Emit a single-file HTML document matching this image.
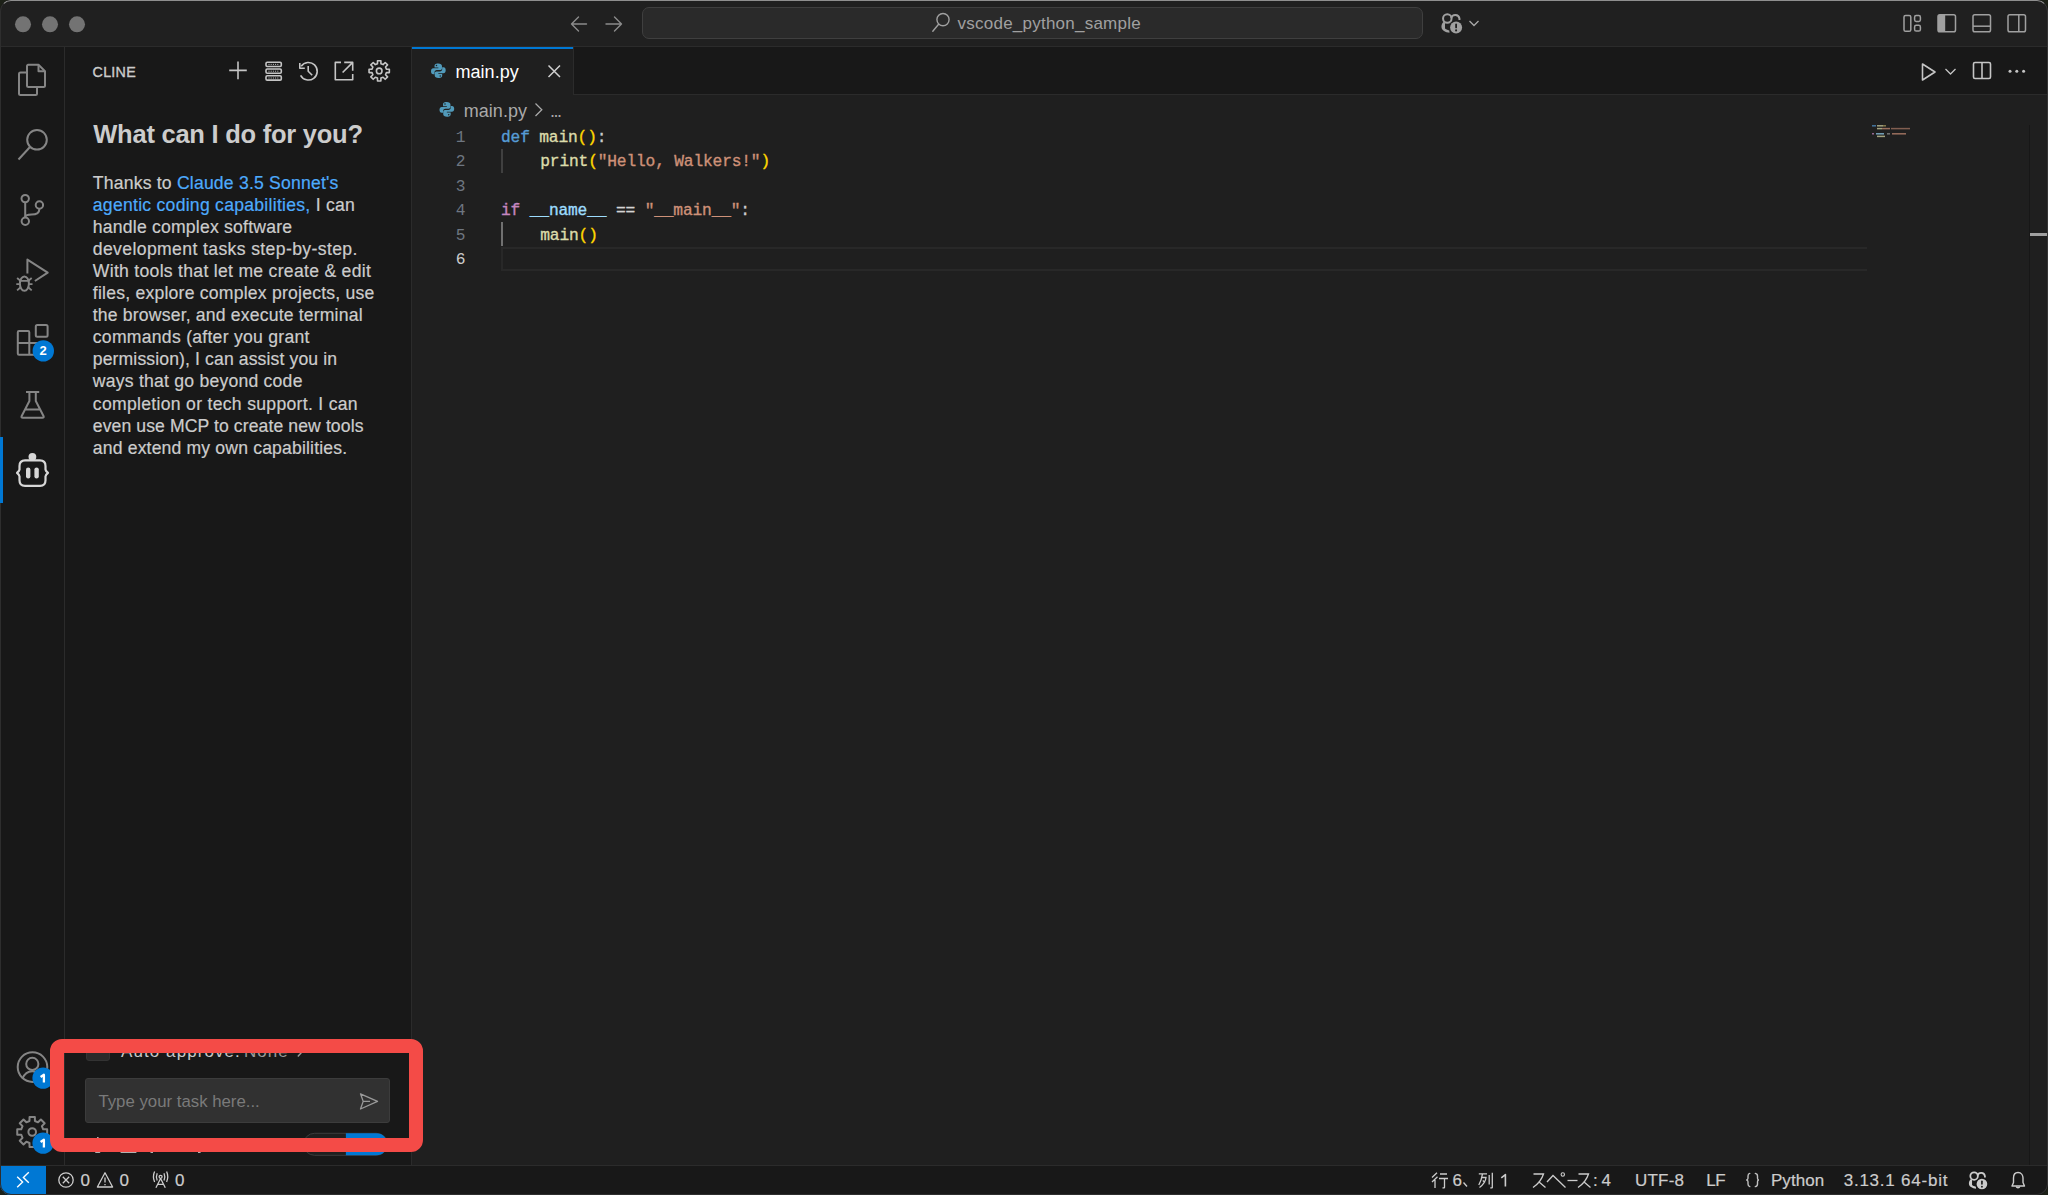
<!DOCTYPE html>
<html><head><meta charset="utf-8">
<style>
*{box-sizing:border-box;margin:0;padding:0}
html,body{width:2048px;height:1195px;overflow:hidden;background:#1d2118}
body{font-family:"Liberation Sans",sans-serif;position:relative}
.a{position:absolute}
#win{position:absolute;left:0;top:0;width:2048px;height:1195px;border-radius:11px;overflow:hidden;background:#1f1f1f}
.txt{position:absolute;white-space:pre;line-height:1}
svg.ic{position:absolute;left:0;top:0;overflow:visible}
</style></head><body>
<div id="win">

<div class="a" style="left:0;top:0;width:2048px;height:46px;background:#202020"></div>
<div class="a" style="left:0;top:46px;width:2048px;height:1px;background:#2b2b2b"></div>
<div class="a" style="left:0;top:47px;width:64px;height:1118px;background:#181818"></div>
<div class="a" style="left:64px;top:47px;width:1px;height:1118px;background:#2b2b2b"></div>
<div class="a" style="left:65px;top:47px;width:346px;height:1118px;background:#181818"></div>
<div class="a" style="left:411px;top:47px;width:1px;height:1118px;background:#2b2b2b"></div>
<div class="a" style="left:412px;top:47px;width:1636px;height:47px;background:#181818"></div>
<div class="a" style="left:573px;top:94px;width:1475px;height:1px;background:#2b2b2b"></div>
<div class="a" style="left:412px;top:47px;width:161px;height:48px;background:#1f1f1f"></div>
<div class="a" style="left:412px;top:47px;width:161px;height:2px;background:#0078d4"></div>
<div class="a" style="left:573px;top:47px;width:1px;height:48px;background:#2b2b2b"></div>
<div class="a" style="left:0;top:1165px;width:2048px;height:1px;background:#2b2b2b"></div>
<div class="a" style="left:0;top:1166px;width:2048px;height:29px;background:#181818"></div>
<svg class="ic" width="2048" height="47">
<circle cx="23" cy="24.3" r="8" fill="#737373"/>
<circle cx="50" cy="24.3" r="8" fill="#737373"/>
<circle cx="77" cy="24.3" r="8" fill="#737373"/>
<g fill="none" stroke="#8b8b8b" stroke-width="1.4" stroke-linecap="round" stroke-linejoin="round">
<path d="M571.5,24 H586.5 M578.5,17 L571.5,24 L578.5,31"/>
<path d="M606,24 H621.5 M614.5,17 L621.5,24 L614.5,31"/>
</g>
<rect x="642.5" y="7.5" width="780" height="31" rx="6.5" fill="#2a2a2a" stroke="#3f3f3f" stroke-width="1"/>
<g fill="none" stroke="#a0a0a0" stroke-width="1.4" stroke-linecap="round">
<circle cx="943" cy="19.6" r="6.1"/>
<path d="M938.6,24.2 L932.8,31.3"/>
</g>
<g transform="translate(1447.3,18.5) scale(1.0)">
<g fill="none" stroke="#a0a0a0" stroke-width="2">
<circle cx="0" cy="0" r="4.25"/>
<path d="M3.9,-0.5 A4.25,4.25 0 0 1 12.15,0 L12.15,1.6"/>
</g>
<path d="M-3.4,3.3 C-6.2,5.2 -6.8,9.8 -4,12 C-2,13.5 0.5,14.1 2.2,14.3 L2,12 C0,11.5 -1.5,10.9 -2.3,10.1 L-2.3,4.2 Z" fill="#a0a0a0"/>
<circle cx="8.8" cy="8.9" r="6.8" fill="#202020"/>
<circle cx="8.8" cy="8.9" r="6" fill="#a0a0a0"/>
<rect x="7.9" y="5" width="1.8" height="4.8" rx="0.9" fill="#202020"/>
<circle cx="8.8" cy="11.9" r="1.05" fill="#202020"/>
</g><path d="M1469.5,21 L1474,25.5 L1478.5,21" fill="none" stroke="#a8a8a8" stroke-width="1.3"/>
<!-- layout icons -->
<g fill="none" stroke="#a0a0a0" stroke-width="1.5">
<rect x="1904" y="15.5" width="6.8" height="15.8" rx="1.6"/>
<rect x="1914.6" y="15.6" width="5.8" height="5.8" rx="1.6"/>
<rect x="1914.6" y="25.3" width="5.8" height="5.8" rx="1.6"/>
<rect x="1938" y="14.8" width="17.5" height="17" rx="1.8"/>
<rect x="1973" y="14.8" width="17.5" height="17" rx="1.8"/>
<path d="M1973,26.2 H1990.5"/>
<rect x="2008" y="14.8" width="17.5" height="17" rx="1.8"/>
<path d="M2018.8,14.8 V31.8"/>
</g>
<path d="M1939.8,14.8 H1945.2 V31.8 H1939.8 Q1938,31.8 1938,30 V16.6 Q1938,14.8 1939.8,14.8 Z" fill="#a0a0a0"/>
</svg>
<div class="txt" style='left:957.60px;top:15.00px;font-size:17px;color:#a0a0a0;font-weight:400;font-family:"Liberation Sans";letter-spacing:0.232px;'>vscode_python_sample</div>
<svg class="ic" width="64" height="1195">
<g fill="none" stroke="#858585" stroke-width="2" stroke-linejoin="round" stroke-linecap="butt">
<!-- explorer -->
<path d="M26,72.5 H20.5 Q19,72.5 19,74 V93.5 Q19,95 20.5,95 H35.5 Q37,95 37,93.5 V87.5"/>
<path d="M28,64.8 H38.5 L45,71.3 V85.5 Q45,87 43.5,87 H28.5 Q27,87 27,85.5 V66.3 Q27,64.8 28.5,64.8 Z"/>
<path d="M38.5,65 V71.3 H45"/>
<!-- search -->
<circle cx="37" cy="139.8" r="9.8"/>
<path d="M30,147 L18.5,159.5"/>
<!-- source control -->
<circle cx="25.2" cy="198.6" r="3.7"/>
<circle cx="39.4" cy="205" r="3.7"/>
<circle cx="25.3" cy="221.2" r="3.7"/>
<path d="M25.2,202.3 V217.5"/>
<path d="M39.4,208.7 C39.4,213.5 36,214.6 31.5,214.6 C27.5,214.6 25.2,215.8 25.2,217.5"/>
<!-- run debug -->
<path d="M27.4,273.4 V259.6 L47.7,272.6 L34.9,281"/>
<ellipse cx="24.4" cy="283.6" rx="4.5" ry="7.2"/>
<path d="M20.2,280.8 H28.6 M17.1,278 L20.4,280.8 M31.7,278 L28.4,280.8 M16.3,284.1 H19.9 M32.5,284.1 H28.9 M17.1,290.4 L20.4,287.5 M31.7,290.4 L28.4,287.5" stroke-width="1.8"/>
<!-- extensions -->
<path d="M29.3,343 V354.8 H19 Q17.8,354.8 17.8,353.6 V332.2 Q17.8,331 19,331 H28.1 Q29.3,331 29.3,332.2 V343 H40.8 Q42,343 42,344.2 V353.6 Q42,354.8 40.8,354.8 H29.3 M17.8,343 H29.3"/>
<rect x="35.8" y="325" width="11.8" height="11.8" rx="1.5"/>
<!-- flask -->
<path d="M26,392 H39.2 M29.4,392 V401 L21.6,416.2 Q21,417.8 22.8,417.8 H42.4 Q44.2,417.8 43.6,416.2 L35.8,401 V392 M24.8,409.4 H40.4"/>
<!-- account -->
<circle cx="32.5" cy="1067.1" r="14.8"/>
<circle cx="32.3" cy="1063.9" r="6.1"/>
<path d="M22.5,1078.5 C24.5,1073.5 28,1071.2 32.3,1071.2 C36.6,1071.2 40,1073.5 42,1078.5"/>
<!-- gear -->
<path d="M43.17,1129.28 L47.16,1129.33 L47.16,1134.67 L43.17,1134.72 L41.88,1137.83 L44.67,1140.69 L40.89,1144.47 L38.03,1141.68 L34.92,1142.97 L34.87,1146.96 L29.53,1146.96 L29.48,1142.97 L26.37,1141.68 L23.51,1144.47 L19.73,1140.69 L22.52,1137.83 L21.23,1134.72 L17.24,1134.67 L17.24,1129.33 L21.23,1129.28 L22.52,1126.17 L19.73,1123.31 L23.51,1119.53 L26.37,1122.32 L29.48,1121.03 L29.53,1117.04 L34.87,1117.04 L34.92,1121.03 L38.03,1122.32 L40.89,1119.53 L44.67,1123.31 L41.88,1126.17Z"/>
<circle cx="32.2" cy="1132" r="3.8"/>
</g>
<!-- cline bot (active) -->
<g fill="none" stroke="#d7d7d7" stroke-width="2.2" stroke-linejoin="round">
<path d="M25,460.4 H40 Q45.5,460.4 45.5,466 V469.5 Q45.7,471 48,472.9 Q45.7,474.8 45.5,476.3 V480.2 Q45.5,485.8 40,485.8 H25 Q19.5,485.8 19.5,480.2 V476.3 Q19.3,474.8 17,472.9 Q19.3,471 19.5,469.5 V466 Q19.5,460.4 25,460.4 Z"/>
</g>
<circle cx="32.4" cy="456.8" r="3.9" fill="#d7d7d7"/>
<rect x="26" y="467.4" width="4.4" height="11" rx="2.2" fill="#d7d7d7"/>
<rect x="34.4" y="467.4" width="4.4" height="11" rx="2.2" fill="#d7d7d7"/>

<!-- badges -->
<circle cx="43.3" cy="350.9" r="10.7" fill="#0078d4"/>
<circle cx="43.1" cy="1078.1" r="10.7" fill="#0078d4"/>
<circle cx="43.1" cy="1143.1" r="10.7" fill="#0078d4"/>
</svg>
<div class="txt" style='left:39.60px;top:344.30px;font-size:13px;color:#ffffff;font-weight:700;font-family:"Liberation Sans";'>2</div>
<svg class="ic" width="64" height="1195"><g fill="none" stroke="#ffffff" stroke-width="2.3" stroke-linejoin="round">
<path d="M40.6,1077 L43.9,1074.8 V1082.4"/><path d="M40.6,1142 L43.9,1139.8 V1147.4"/></g></svg>
<div class="txt" style='left:92.60px;top:64.80px;font-size:14.3px;color:#cccccc;font-weight:400;font-family:"Liberation Sans";letter-spacing:0.250px;-webkit-text-stroke:0.35px currentColor;'>CLINE</div>
<svg class="ic" width="412" height="100">
<g fill="none" stroke="#c5c5c5" stroke-width="1.6" stroke-linecap="butt" stroke-linejoin="round">
<path d="M238,61.6 V79.2 M229.2,70.4 H246.8"/>
<rect x="266" y="62.2" width="15.3" height="4.3" rx="1.2"/>
<rect x="266" y="69" width="15.3" height="4.3" rx="1.2"/>
<rect x="266" y="75.8" width="15.3" height="4.3" rx="1.2"/>
<path d="M301.2,66.2 A8.8,8.8 0 1 1 300.6,75.3"/>
<path d="M299.8,63 V68.2 H304.8"/>
<path d="M308.2,65.9 V71.3 L312.2,75.2"/>
<path d="M341,62.4 H335.3 V79.8 H352.7 V74 M344.2,62.4 H352.7 V70.8 M352.5,62.6 L342.6,72.5"/>
<path d="M386.40,69.17 L389.36,69.21 L389.36,72.59 L386.40,72.63 L385.51,74.77 L387.58,76.89 L385.19,79.28 L383.07,77.21 L380.93,78.10 L380.89,81.06 L377.51,81.06 L377.47,78.10 L375.33,77.21 L373.21,79.28 L370.82,76.89 L372.89,74.77 L372.00,72.63 L369.04,72.59 L369.04,69.21 L372.00,69.17 L372.89,67.03 L370.82,64.91 L373.21,62.52 L375.33,64.59 L377.47,63.70 L377.51,60.74 L380.89,60.74 L380.93,63.70 L383.07,64.59 L385.19,62.52 L387.58,64.91 L385.51,67.03Z"/>
<circle cx="379.2" cy="70.9" r="2.8"/>
</g>
<g stroke="#c5c5c5" stroke-width="1" stroke-dasharray="1 1.2">
<path d="M268.5,64.4 H278.8 M268.5,71.2 H278.8 M268.5,78 H278.8"/>
</g>
</svg>
<div class="txt" style='left:93.30px;top:122.10px;font-size:25.5px;color:#cccccc;font-weight:700;font-family:"Liberation Sans";letter-spacing:-0.243px;'>What can I do for you?</div>
<div class="txt" style='left:92.80px;top:175.20px;font-size:17.6px;color:#cccccc;font-weight:400;font-family:"Liberation Sans";letter-spacing:0.196px;-webkit-text-stroke:0.2px currentColor;'>Thanks to <span style="color:#4daafc">Claude 3.5 Sonnet&#39;s</span></div>
<div class="txt" style='left:92.80px;top:197.23px;font-size:17.6px;color:#cccccc;font-weight:400;font-family:"Liberation Sans";letter-spacing:0.264px;-webkit-text-stroke:0.2px currentColor;'><span style="color:#4daafc">agentic coding capabilities,</span> I can</div>
<div class="txt" style='left:92.80px;top:219.26px;font-size:17.6px;color:#cccccc;font-weight:400;font-family:"Liberation Sans";letter-spacing:0.209px;-webkit-text-stroke:0.2px currentColor;'>handle complex software</div>
<div class="txt" style='left:92.80px;top:241.29px;font-size:17.6px;color:#cccccc;font-weight:400;font-family:"Liberation Sans";letter-spacing:0.377px;-webkit-text-stroke:0.2px currentColor;'>development tasks step-by-step.</div>
<div class="txt" style='left:92.80px;top:263.32px;font-size:17.6px;color:#cccccc;font-weight:400;font-family:"Liberation Sans";letter-spacing:0.289px;-webkit-text-stroke:0.2px currentColor;'>With tools that let me create &amp; edit</div>
<div class="txt" style='left:92.80px;top:285.35px;font-size:17.6px;color:#cccccc;font-weight:400;font-family:"Liberation Sans";letter-spacing:0.220px;-webkit-text-stroke:0.2px currentColor;'>files, explore complex projects, use</div>
<div class="txt" style='left:92.80px;top:307.38px;font-size:17.6px;color:#cccccc;font-weight:400;font-family:"Liberation Sans";letter-spacing:0.178px;-webkit-text-stroke:0.2px currentColor;'>the browser, and execute terminal</div>
<div class="txt" style='left:92.80px;top:329.41px;font-size:17.6px;color:#cccccc;font-weight:400;font-family:"Liberation Sans";letter-spacing:0.267px;-webkit-text-stroke:0.2px currentColor;'>commands (after you grant</div>
<div class="txt" style='left:92.80px;top:351.44px;font-size:17.6px;color:#cccccc;font-weight:400;font-family:"Liberation Sans";letter-spacing:0.119px;-webkit-text-stroke:0.2px currentColor;'>permission), I can assist you in</div>
<div class="txt" style='left:92.80px;top:373.47px;font-size:17.6px;color:#cccccc;font-weight:400;font-family:"Liberation Sans";letter-spacing:0.226px;-webkit-text-stroke:0.2px currentColor;'>ways that go beyond code</div>
<div class="txt" style='left:92.80px;top:395.50px;font-size:17.6px;color:#cccccc;font-weight:400;font-family:"Liberation Sans";letter-spacing:0.300px;-webkit-text-stroke:0.2px currentColor;'>completion or tech support. I can</div>
<div class="txt" style='left:92.80px;top:417.53px;font-size:17.6px;color:#cccccc;font-weight:400;font-family:"Liberation Sans";letter-spacing:0.097px;-webkit-text-stroke:0.2px currentColor;'>even use MCP to create new tools</div>
<div class="txt" style='left:92.80px;top:439.56px;font-size:17.6px;color:#cccccc;font-weight:400;font-family:"Liberation Sans";letter-spacing:0.163px;-webkit-text-stroke:0.2px currentColor;'>and extend my own capabilities.</div>
<svg class="ic" width="2048" height="130">
<g transform="translate(431,63.4) scale(0.98)" fill="#519aba">
<path d="M7.3,0 C4.2,0 3.6,1.3 3.6,2.6 V4.3 H7.5 V5 H2.3 C0.9,5 0,6.2 0,8 C0,9.8 0.8,11 2.2,11 H3.6 V9.1 C3.6,7.8 4.6,6.8 5.9,6.8 H9.4 C10.5,6.8 11.2,6 11.2,4.9 V2.6 C11.2,1.1 9.9,0 7.3,0 Z"/>
<path d="M7.7,15 C10.8,15 11.4,13.7 11.4,12.4 V10.7 H7.5 V10 H12.7 C14.1,10 15,8.8 15,7 C15,5.2 14.2,4 12.8,4 H11.4 V5.9 C11.4,7.2 10.4,8.2 9.1,8.2 H5.6 C4.5,8.2 3.8,9 3.8,10.1 V12.4 C3.8,13.9 5.1,15 7.7,15 Z"/>
<circle cx="5.6" cy="2.1" r="0.75" fill="#1f1f1f"/>
<circle cx="9.4" cy="12.9" r="0.75" fill="#1f1f1f"/>
</g>
<g transform="translate(439.5,102) scale(0.98)" fill="#519aba">
<path d="M7.3,0 C4.2,0 3.6,1.3 3.6,2.6 V4.3 H7.5 V5 H2.3 C0.9,5 0,6.2 0,8 C0,9.8 0.8,11 2.2,11 H3.6 V9.1 C3.6,7.8 4.6,6.8 5.9,6.8 H9.4 C10.5,6.8 11.2,6 11.2,4.9 V2.6 C11.2,1.1 9.9,0 7.3,0 Z"/>
<path d="M7.7,15 C10.8,15 11.4,13.7 11.4,12.4 V10.7 H7.5 V10 H12.7 C14.1,10 15,8.8 15,7 C15,5.2 14.2,4 12.8,4 H11.4 V5.9 C11.4,7.2 10.4,8.2 9.1,8.2 H5.6 C4.5,8.2 3.8,9 3.8,10.1 V12.4 C3.8,13.9 5.1,15 7.7,15 Z"/>
<circle cx="5.6" cy="2.1" r="0.75" fill="#1f1f1f"/>
<circle cx="9.4" cy="12.9" r="0.75" fill="#1f1f1f"/>
</g>
<path d="M548.5,65.5 L560,77 M560,65.5 L548.5,77" stroke="#d0d0d0" stroke-width="1.5" fill="none"/>
<path d="M535.5,103.5 L541.8,109.8 L535.5,116" stroke="#a9a9a9" stroke-width="1.3" fill="none"/>
<!-- editor toolbar -->
<g fill="none" stroke="#c5c5c5" stroke-width="1.6" stroke-linejoin="round">
<path d="M1922.5,64 L1935,72 L1922.5,80 Z"/>
<path d="M1945.5,69 L1950.5,74 L1955.5,69" stroke-width="1.3"/>
<rect x="1973.5" y="62.5" width="17" height="16" rx="1.5"/>
<path d="M1982,62.5 V78.5"/>
</g>
<g fill="#c5c5c5"><circle cx="2010" cy="71.2" r="1.5"/><circle cx="2016.8" cy="71.2" r="1.5"/><circle cx="2023.6" cy="71.2" r="1.5"/></g>
</svg>
<div class="txt" style='left:455.50px;top:62.90px;font-size:18px;color:#ffffff;font-weight:400;font-family:"Liberation Sans";letter-spacing:0.033px;'>main.py</div>
<div class="txt" style='left:463.70px;top:101.70px;font-size:18px;color:#a9a9a9;font-weight:400;font-family:"Liberation Sans";letter-spacing:0.050px;'>main.py</div>
<div class="txt" style='left:550.00px;top:101.70px;font-size:18px;color:#a9a9a9;font-weight:400;font-family:"Liberation Sans";letter-spacing:-1.500px;'>...</div>
<div class="txt" style='left:455.68px;top:130.10px;font-size:16.25px;color:#6e7681;font-weight:400;font-family:"Liberation Mono";'>1</div>
<div class="txt" style='left:455.68px;top:154.46px;font-size:16.25px;color:#6e7681;font-weight:400;font-family:"Liberation Mono";'>2</div>
<div class="txt" style='left:455.68px;top:178.82px;font-size:16.25px;color:#6e7681;font-weight:400;font-family:"Liberation Mono";'>3</div>
<div class="txt" style='left:455.68px;top:203.18px;font-size:16.25px;color:#6e7681;font-weight:400;font-family:"Liberation Mono";'>4</div>
<div class="txt" style='left:455.68px;top:227.54px;font-size:16.25px;color:#6e7681;font-weight:400;font-family:"Liberation Mono";'>5</div>
<div class="txt" style='left:455.68px;top:251.90px;font-size:16.25px;color:#cccccc;font-weight:400;font-family:"Liberation Mono";'>6</div>
<div class="txt" style='left:501.00px;top:130.10px;font-size:16.25px;color:#cccccc;font-weight:400;font-family:"Liberation Mono";letter-spacing:-0.18px;-webkit-text-stroke:0.35px currentColor;'><span style="color:#569cd6">def</span> <span style="color:#dcdcaa">main</span><span style="color:#ffd700">()</span>:</div>
<div class="txt" style='left:540.28px;top:154.46px;font-size:16.25px;color:#cccccc;font-weight:400;font-family:"Liberation Mono";letter-spacing:-0.18px;-webkit-text-stroke:0.35px currentColor;'><span style="color:#dcdcaa">print</span><span style="color:#ffd700">(</span><span style="color:#ce9178">"Hello, Walkers!"</span><span style="color:#ffd700">)</span></div>
<div class="txt" style='left:501.00px;top:203.18px;font-size:16.25px;color:#cccccc;font-weight:400;font-family:"Liberation Mono";letter-spacing:-0.18px;-webkit-text-stroke:0.35px currentColor;'><span style="color:#c586c0">if</span> <span style="color:#9cdcfe">__name__</span> <span style="color:#d4d4d4">==</span> <span style="color:#ce9178">"__main__"</span>:</div>
<div class="txt" style='left:540.28px;top:227.54px;font-size:16.25px;color:#cccccc;font-weight:400;font-family:"Liberation Mono";letter-spacing:-0.18px;-webkit-text-stroke:0.35px currentColor;'><span style="color:#dcdcaa">main</span><span style="color:#ffd700">()</span></div>
<div class="a" style="left:501px;top:149px;width:2px;height:24.4px;background:#404040"></div>
<div class="a" style="left:501px;top:222px;width:2px;height:24.4px;background:#707070"></div>
<div class="a" style="left:501px;top:246.6px;width:1366px;height:24.4px;border:2px solid #282828;border-right:none"></div>
<div class="a" style="left:2029px;top:125px;width:1px;height:1040px;background:#171717"></div>
<div class="a" style="left:2030px;top:232.5px;width:18px;height:3px;background:#a0a0a0"></div>

<svg class="ic" width="2048" height="200">
<g stroke-width="1.5" opacity="0.7">
<path d="M1872,125.8 H1876" stroke="#569cd6"/><path d="M1877,125.8 H1883" stroke="#dcdcaa"/><path d="M1883,125.8 H1886" stroke="#b0a060"/>
<path d="M1877,128.6 H1882" stroke="#dcdcaa"/><path d="M1882,128.6 H1890" stroke="#ce9178"/><path d="M1891,128.6 H1910" stroke="#ce9178" opacity="0.8"/>
<path d="M1872,133.8 H1874" stroke="#c586c0"/><path d="M1876,133.8 H1884" stroke="#9cdcfe"/><path d="M1887,133.8 H1890" stroke="#999"/><path d="M1892,133.8 H1906" stroke="#ce9178"/>
<path d="M1877,136.4 H1885" stroke="#dcdcaa"/>
</g>
</svg>
<div class="a" style="left:85.5px;top:1044px;width:24px;height:17px;border-radius:3px;background:#2a2a2a;border:1px solid #333"></div>
<div class="a" style="left:85px;top:1078.4px;width:305px;height:44.3px;border-radius:3px;background:#313131;border:1px solid #3c3c3c"></div>
<svg class="ic" width="412" height="1195">
<path d="M360.5,1093.8 L377.5,1101.4 L360.5,1109 L363.2,1101.4 Z M363.2,1101.4 H370" fill="none" stroke="#9a9a9a" stroke-width="1.3" stroke-linejoin="round"/>
<rect x="303.5" y="1133.3" width="84" height="22" rx="11" fill="#1f1f1f" stroke="#3c3c3c" stroke-width="1"/>
<path d="M345.9,1133.3 H376.5 A11,11 0 0 1 376.5,1155.3 H345.9 Z" fill="#0078d4"/>
</svg>
<div class="txt" style='left:121.00px;top:1043.00px;font-size:17px;color:#c8c8c8;font-weight:400;font-family:"Liberation Sans";letter-spacing:1.083px;'>Auto approve:</div>
<div class="txt" style='left:244.00px;top:1043.00px;font-size:17px;color:#9a9a9a;font-weight:400;font-family:"Liberation Sans";letter-spacing:1.000px;'>None</div>
<svg class="ic" width="412" height="1195">
<path d="M297.8,1056.5 L301.5,1052.5" stroke="#9a9a9a" stroke-width="1.4"/>
<g fill="#b0b0b0">
<rect x="95" y="1151" width="5.4" height="2" rx="1"/>
<rect x="120.6" y="1151" width="15.8" height="2"/>
<rect x="150.5" y="1151" width="2.5" height="2"/>
<rect x="198" y="1151" width="2.6" height="2"/>
<rect x="97" y="1137" width="1.6" height="1.6"/>
</g></svg>
<div class="txt" style='left:98.40px;top:1093.90px;font-size:16.8px;color:#7a7a7a;font-weight:400;font-family:"Liberation Sans";'>Type your task here...</div>
<div class="a" style="left:50px;top:1039px;width:372.8px;height:112.6px;border:14px solid #f44b47;border-radius:12px;z-index:20"></div>
<svg class="ic" width="2048" height="1195">
<path d="M0,1166 H46 V1195 H0 Z" fill="#0078d4"/>
<path d="M17.2,1176.8 L22.6,1182 L17.2,1187.3 M28.8,1172.2 L23.4,1177.4 L28.8,1182.7" fill="none" stroke="#ffffff" stroke-width="1.4"/>
<g fill="none" stroke="#cccccc" stroke-width="1.3">
<circle cx="66" cy="1180" r="7.2"/>
<path d="M62.8,1176.8 L69.2,1183.2 M69.2,1176.8 L62.8,1183.2"/>
<path d="M105,1172.8 L112.6,1187 H97.4 Z" stroke-linejoin="round"/>
<path d="M105,1177.5 V1182.5 M105,1184 V1185.2"/>
<path d="M160.6,1178.5 L155.9,1187.8 M160.6,1178.5 L165.3,1187.8 M157.6,1184.3 H163.6" />
<circle cx="160.6" cy="1176.8" r="1.5"/>
<path d="M157.2,1173.2 Q155.6,1176.8 157.2,1180.4 M164,1173.2 Q165.6,1176.8 164,1180.4 M154.6,1171.6 Q152.3,1176.8 154.6,1182 M166.6,1171.6 Q168.9,1176.8 166.6,1182"/>
</g>
<g fill="none" stroke="#cccccc" stroke-width="1.4" stroke-linejoin="round">
<path d="M2018,1172.5 C2014.5,1172.5 2013.5,1175.5 2013.5,1178 V1182.5 L2012,1186 H2024.5 L2023,1182.5 V1178 C2023,1175.5 2021.5,1172.5 2018,1172.5 Z"/>
<path d="M2016.2,1186.5 A1.9,1.9 0 0 0 2019.8,1186.5"/>
</g>
<g transform="translate(1974.1,1176.05) scale(0.89)">
<g fill="none" stroke="#cccccc" stroke-width="2">
<circle cx="0" cy="0" r="4.25"/>
<path d="M3.9,-0.5 A4.25,4.25 0 0 1 12.15,0 L12.15,1.6"/>
</g>
<path d="M-3.4,3.3 C-6.2,5.2 -6.8,9.8 -4,12 C-2,13.5 0.5,14.1 2.2,14.3 L2,12 C0,11.5 -1.5,10.9 -2.3,10.1 L-2.3,4.2 Z" fill="#cccccc"/>
<circle cx="8.8" cy="8.9" r="6.8" fill="#181818"/>
<circle cx="8.8" cy="8.9" r="6" fill="#cccccc"/>
<rect x="7.9" y="5" width="1.8" height="4.8" rx="0.9" fill="#181818"/>
<circle cx="8.8" cy="11.9" r="1.05" fill="#181818"/>
</g></svg>
<div class="txt" style='left:80.50px;top:1172.40px;font-size:17px;color:#cccccc;font-weight:400;font-family:"Liberation Sans";-webkit-text-stroke:0.2px currentColor;'>0</div>
<div class="txt" style='left:119.60px;top:1172.40px;font-size:17px;color:#cccccc;font-weight:400;font-family:"Liberation Sans";-webkit-text-stroke:0.2px currentColor;'>0</div>
<div class="txt" style='left:174.90px;top:1172.40px;font-size:17px;color:#cccccc;font-weight:400;font-family:"Liberation Sans";-webkit-text-stroke:0.2px currentColor;'>0</div>
<div class="txt" style='left:1452.50px;top:1172.40px;font-size:17px;color:#cccccc;font-weight:400;font-family:"Liberation Sans";-webkit-text-stroke:0.2px currentColor;'>6</div>
<svg class="ic" width="2048" height="1195"><path d="M1501.3,1177.9 L1505.4,1174.6 V1186.4" fill="none" stroke="#cccccc" stroke-width="1.6" stroke-linejoin="round"/></svg>
<div class="txt" style='left:1601.50px;top:1172.40px;font-size:17px;color:#cccccc;font-weight:400;font-family:"Liberation Sans";-webkit-text-stroke:0.2px currentColor;'>4</div>
<div class="txt" style='left:1593.00px;top:1172.40px;font-size:17px;color:#cccccc;font-weight:400;font-family:"Liberation Sans";-webkit-text-stroke:0.2px currentColor;'>:</div>
<div class="txt" style='left:1635.00px;top:1172.40px;font-size:17px;color:#cccccc;font-weight:400;font-family:"Liberation Sans";letter-spacing:0.200px;-webkit-text-stroke:0.2px currentColor;'>UTF-8</div>
<div class="txt" style='left:1706.30px;top:1172.40px;font-size:17px;color:#cccccc;font-weight:400;font-family:"Liberation Sans";letter-spacing:-0.500px;-webkit-text-stroke:0.2px currentColor;'>LF</div>
<svg class="ic" width="2048" height="1195"><path d="M1749.8,1173.4 Q1748,1173.8 1748,1176 V1178.3 Q1748,1179.7 1746.3,1180 Q1748,1180.3 1748,1181.7 V1184 Q1748,1186.2 1749.8,1186.6 M1755.3,1173.4 Q1757.5,1173.8 1757.5,1176 V1178.3 Q1757.5,1179.7 1758.8,1180 Q1757.5,1180.3 1757.5,1181.7 V1184 Q1757.5,1186.2 1755.3,1186.6" fill="none" stroke="#c0c0c0" stroke-width="1.4" stroke-linecap="round"/></svg>
<div class="txt" style='left:1770.90px;top:1172.40px;font-size:17px;color:#cccccc;font-weight:400;font-family:"Liberation Sans";letter-spacing:0.100px;-webkit-text-stroke:0.2px currentColor;'>Python</div>
<div class="txt" style='left:1843.70px;top:1172.40px;font-size:17px;color:#cccccc;font-weight:400;font-family:"Liberation Sans";letter-spacing:0.767px;-webkit-text-stroke:0.2px currentColor;'>3.13.1 64-bit</div>
<svg class="ic" width="2048" height="1195">
<g fill="none" stroke="#cccccc" stroke-width="1.3" stroke-linecap="butt">
<!-- 行 -->
<path d="M1437,1172.8 L1432,1177.5 M1437.5,1176.8 L1432,1182 M1435,1180 V1188 M1440,1174 H1447 M1439,1178.5 H1448 M1444.5,1178.5 V1187.5 Q1444.5,1188 1442.5,1187.8"/>
<!-- 、 -->
<path d="M1463.5,1182.5 L1467,1186.5"/>
<!-- 列 -->
<path d="M1478.8,1173.8 H1487 M1482.5,1173.8 Q1481.5,1180 1478.8,1185 M1481.3,1177.5 H1486 Q1485.5,1183 1479.5,1187.5 M1482.8,1180.5 L1485,1182.5 M1489.2,1175 V1184.5 M1492.3,1172.8 V1187.8 Q1492.3,1188 1490.3,1187.8"/>
<!-- ス -->
<path d="M1533.5,1174 H1543.5 Q1541,1182 1533,1187.5 M1538.5,1181.5 L1545.5,1187.5"/>
<!-- ペ -->
<path d="M1547,1182 L1553,1175.5 L1565.5,1187.5"/>
<circle cx="1562.8" cy="1174.5" r="1.7" stroke-width="1.1"/>
<!-- ー -->
<path d="M1567.5,1180.5 H1577.5"/>
<!-- ス -->
<path d="M1578.5,1174 H1588.5 Q1586,1182 1578,1187.5 M1583.5,1181.5 L1590.5,1187.5"/>
</g>
</svg>
<div class="a" style="left:0;top:437px;width:3px;height:66px;background:#0078d4;z-index:60"></div>
<div class="a" style="left:0;top:0;width:2048px;height:1195px;border-radius:11px;border:1px solid #2e2e2e;border-right-color:#353535;border-top-color:#8f8f8f;pointer-events:none;z-index:50"></div>
</div></body></html>
